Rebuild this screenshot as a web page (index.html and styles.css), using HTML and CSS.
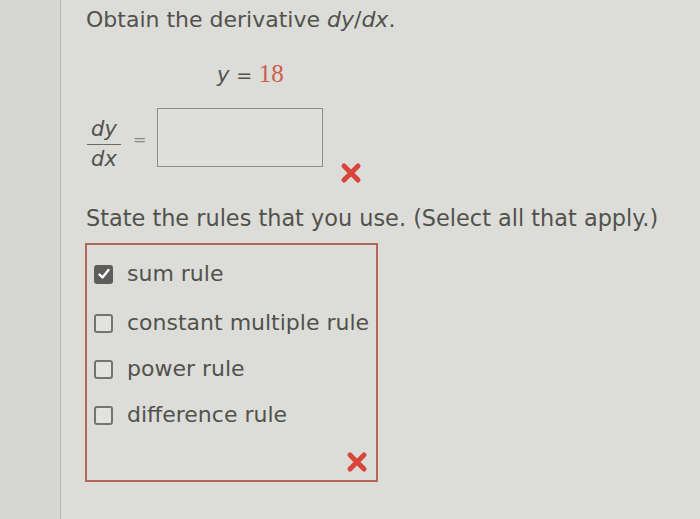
FILE: index.html
```html
<!DOCTYPE html>
<html>
<head>
<meta charset="utf-8">
<link rel="stylesheet" href="styles.css">
</head>
<body>
<div class="page">
  <div class="gutter"></div>
  <div class="content">
    <p class="prompt">Obtain the derivative <i>dy</i>/<i>dx</i>.</p>
    <div class="eq"><i class="var">y</i> <span class="op">=</span> <span class="num">18</span></div>
    <div class="answer-row">
      <div class="frac">
        <span class="top"><i>dy</i></span>
        <span class="bot"><i>dx</i></span>
      </div>
      <span class="eqsign">=</span>
      <div class="input"></div>
      <span class="xmark small">
        <svg width="22" height="22" viewBox="0 0 22 22"><path d="M4 4 L18 18 M18 4 L4 18" stroke="#d9453a" stroke-width="5" stroke-linecap="round"/></svg>
      </span>
    </div>
    <p class="prompt second">State the rules that you use. (Select all that apply.)</p>
    <div class="choices">
      <label class="choice"><span class="box checked"><svg width="14" height="14" viewBox="0 0 14 14"><path d="M2.5 7.5 L5.5 10.5 L11.5 3" fill="none" stroke="#fff" stroke-width="2.4" stroke-linecap="round" stroke-linejoin="round"/></svg></span>sum rule</label>
      <label class="choice"><span class="box"></span>constant multiple rule</label>
      <label class="choice"><span class="box"></span>power rule</label>
      <label class="choice"><span class="box"></span>difference rule</label>
      <div class="choice-foot">
        <svg width="22" height="22" viewBox="0 0 22 22"><path d="M4 4 L18 18 M18 4 L4 18" stroke="#d9453a" stroke-width="5" stroke-linecap="round"/></svg>
      </div>
    </div>
  </div>
</div>
</body>
</html>
```
FILE: styles.css
```css
html, body {
  margin: 0;
  padding: 0;
}
body {
  width: 700px;
  height: 519px;
  overflow: hidden;
  background: #dcdcd8;
  font-family: "DejaVu Sans", Verdana, sans-serif;
  color: #52524d;
}
.page {
  display: flex;
  height: 519px;
}
.gutter {
  width: 60px;
  border-right: 1px solid #b9b9b5;
  background: #d6d6d2;
}
.content {
  flex: 1;
  padding: 7px 0 0 25px;
}
.prompt {
  margin: 0;
  font-size: 22px;
  line-height: 26px;
}
.eq {
  margin: 28px 0 0 131px;
  font-size: 21px;
  line-height: 26px;
}
.eq .op {
  font-size: 19px;
}
.eq .num {
  font-family: "Liberation Serif", serif;
  color: #cc5e50;
  font-size: 25px;
}
.answer-row {
  display: flex;
  align-items: flex-start;
  margin-top: 20px;
}
.frac {
  display: flex;
  flex-direction: column;
  align-items: center;
  width: 34px;
  margin: 8px 0 0 1px;
  font-size: 21px;
}
.frac .top {
  line-height: 26px;
  padding-bottom: 2px;
  border-bottom: 1.5px solid #6a6a66;
  width: 100%;
  text-align: center;
}
.frac .bot {
  line-height: 26px;
  padding-top: 1px;
}
.eqsign {
  margin: 22px 0 0 12px;
  font-size: 16px;
  color: #888884;
}
.input {
  width: 164px;
  height: 57px;
  border: 1.5px solid #8c8c88;
  margin-left: 11px;
  background: #dfdfdb;
}
.xmark.small {
  margin: 54px 0 0 17px;
}
.prompt.second {
  margin-top: 17px;
  font-size: 22.4px;
}
.choices {
  width: 293px;
  margin: 12px 0 0 -1px;
  border: 2px solid #b46657;
  padding: 16px 0 0 7px;
  box-sizing: border-box;
  height: 239px;
}
.choice {
  display: flex;
  align-items: center;
  font-size: 22px;
  line-height: 26px;
  height: 26px;
  margin-bottom: 23px;
}
.choice:nth-child(2) { margin-bottom: 20px; }
.choice:nth-child(3) { margin-bottom: 20px; }
.box {
  width: 15px;
  height: 15px;
  border: 2px solid #737370;
  border-radius: 3px;
  margin-right: 14px;
  display: flex;
  align-items: center;
  justify-content: center;
  background: #e2e2de;
}
.box.checked {
  background: #5f5d5b;
  border-color: #5f5d5b;
}
.choice-foot {
  display: flex;
  justify-content: flex-end;
  padding-right: 8px;
  margin-top: 1px;
}
```
